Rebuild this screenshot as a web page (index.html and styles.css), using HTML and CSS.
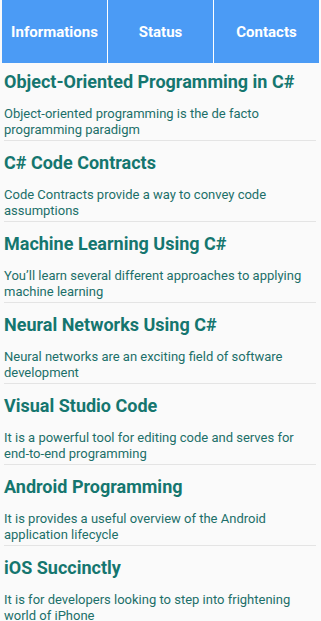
FILE: index.html
```html
<!DOCTYPE html>
<html>
<head>
<meta charset="utf-8">
<link rel="stylesheet" href="styles.css">
</head>
<body>
<div class="tabs">
  <div class="tab">Informations</div>
  <div class="tab">Status</div>
  <div class="tab">Contacts</div>
</div>
<div class="list">
  <div class="item first">
    <div class="title">Object-Oriented Programming in C#</div>
    <div class="desc">Object-oriented programming is the de facto programming paradigm</div>
  </div>
  <div class="item">
    <div class="title">C# Code Contracts</div>
    <div class="desc">Code Contracts provide a way to convey code assumptions</div>
  </div>
  <div class="item">
    <div class="title">Machine Learning Using C#</div>
    <div class="desc">You’ll learn several different approaches to applying machine learning</div>
  </div>
  <div class="item">
    <div class="title">Neural Networks Using C#</div>
    <div class="desc">Neural networks are an exciting field of software development</div>
  </div>
  <div class="item">
    <div class="title">Visual Studio Code</div>
    <div class="desc">It is a powerful tool for editing code and serves for end-to-end programming</div>
  </div>
  <div class="item">
    <div class="title">Android Programming</div>
    <div class="desc">It is provides a useful overview of the Android application lifecycle</div>
  </div>
  <div class="item">
    <div class="title">iOS Succinctly</div>
    <div class="desc">It is for developers looking to step into frightening world of iPhone</div>
  </div>
</div>
</body>
</html>
```
FILE: styles.css
```css
html, body {
  margin: 0;
  padding: 0;
  background: #fafafa;
  font-family: Roboto, "Liberation Sans", sans-serif;
  overflow: hidden;
  height: 621px;
}
.tabs {
  display: grid;
  grid-template-columns: 105px 105px 105px;
  gap: 1px;
  margin-left: 2px;
  background: #ffffff;
  width: 317px;
}
.tab {
  background: #4b9bf5;
  height: 63px;
  display: flex;
  align-items: center;
  justify-content: center;
  color: #ffffff;
  font-weight: bold;
  font-size: 15px;
}
.list {
  padding: 0 5px 0 4px;
}
.item {
  padding: 10px 0 2px;
  border-bottom: 1px solid #e4e4e4;
}
.item.first {
  padding-top: 7px;
}
.title {
  font-size: 18px;
  line-height: 24px;
  font-weight: bold;
  color: #15766f;
  margin-bottom: 12px;
}
.desc {
  font-size: 13px;
  line-height: 16px;
  color: #1c6f69;
}
```
